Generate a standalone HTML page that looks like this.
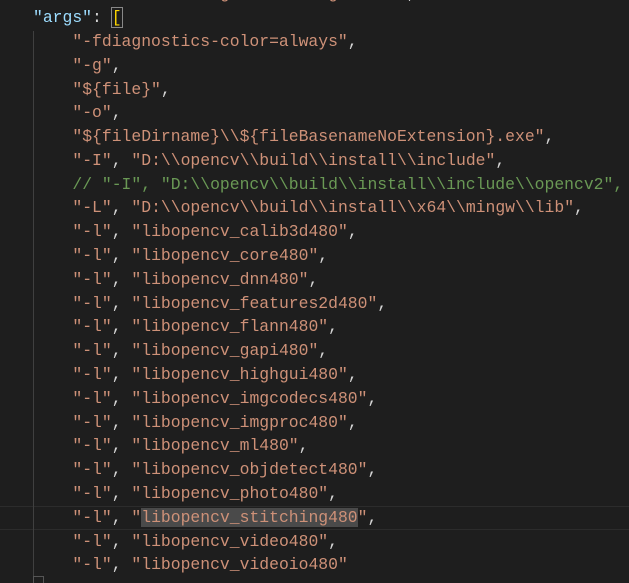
<!DOCTYPE html>
<html><head><meta charset="utf-8"><style>
html,body{margin:0;padding:0;background:#1e1e1e;width:629px;height:581px;overflow:hidden}
#c{position:absolute;left:33px;top:-17.7px;font-family:"Liberation Mono",monospace;font-size:16.4px;line-height:23.8px;color:#d4d4d4;white-space:pre}
.k{color:#9cdcfe}.s{color:#ce9178}.g{color:#6a9955}
.b{color:#ffd700;outline:1px solid #888;outline-offset:0}
.sel{background:#4a4a4a}
#guide{position:absolute;left:33px;top:31px;width:1px;height:550px;background:#404040}
#cur{position:absolute;left:0;top:506px;width:629px;height:22px;border-top:1px solid #2c2c2c;border-bottom:1px solid #2c2c2c}
#bot{position:absolute;left:33px;top:576px;width:9px;height:6px;border:1px solid #555;border-bottom:none}
</style></head><body>
<div id="cur"></div>
<div id="guide"></div>
<div id="bot"></div>
<div id="c"><span class="k">"command"</span>: <span class="s">"D:\\mingw64\\bin\\g++.exe"</span>,
<span class="k">"args"</span>: <span class="b">[</span>
    <span class="s">"-fdiagnostics-color=always"</span>,
    <span class="s">"-g"</span>,
    <span class="s">"${file}"</span>,
    <span class="s">"-o"</span>,
    <span class="s">"${fileDirname}\\${fileBasenameNoExtension}.exe"</span>,
    <span class="s">"-I"</span>, <span class="s">"D:\\opencv\\build\\install\\include"</span>,
    <span class="g">// "-I", "D:\\opencv\\build\\install\\include\\opencv2",</span>
    <span class="s">"-L"</span>, <span class="s">"D:\\opencv\\build\\install\\x64\\mingw\\lib"</span>,
    <span class="s">"-l"</span>, <span class="s">"libopencv_calib3d480"</span>,
    <span class="s">"-l"</span>, <span class="s">"libopencv_core480"</span>,
    <span class="s">"-l"</span>, <span class="s">"libopencv_dnn480"</span>,
    <span class="s">"-l"</span>, <span class="s">"libopencv_features2d480"</span>,
    <span class="s">"-l"</span>, <span class="s">"libopencv_flann480"</span>,
    <span class="s">"-l"</span>, <span class="s">"libopencv_gapi480"</span>,
    <span class="s">"-l"</span>, <span class="s">"libopencv_highgui480"</span>,
    <span class="s">"-l"</span>, <span class="s">"libopencv_imgcodecs480"</span>,
    <span class="s">"-l"</span>, <span class="s">"libopencv_imgproc480"</span>,
    <span class="s">"-l"</span>, <span class="s">"libopencv_ml480"</span>,
    <span class="s">"-l"</span>, <span class="s">"libopencv_objdetect480"</span>,
    <span class="s">"-l"</span>, <span class="s">"libopencv_photo480"</span>,
    <span class="s">"-l"</span>, <span class="s">"<span class="sel">libopencv_stitching480</span>"</span>,
    <span class="s">"-l"</span>, <span class="s">"libopencv_video480"</span>,
    <span class="s">"-l"</span>, <span class="s">"libopencv_videoio480"</span></div>
</body></html>
